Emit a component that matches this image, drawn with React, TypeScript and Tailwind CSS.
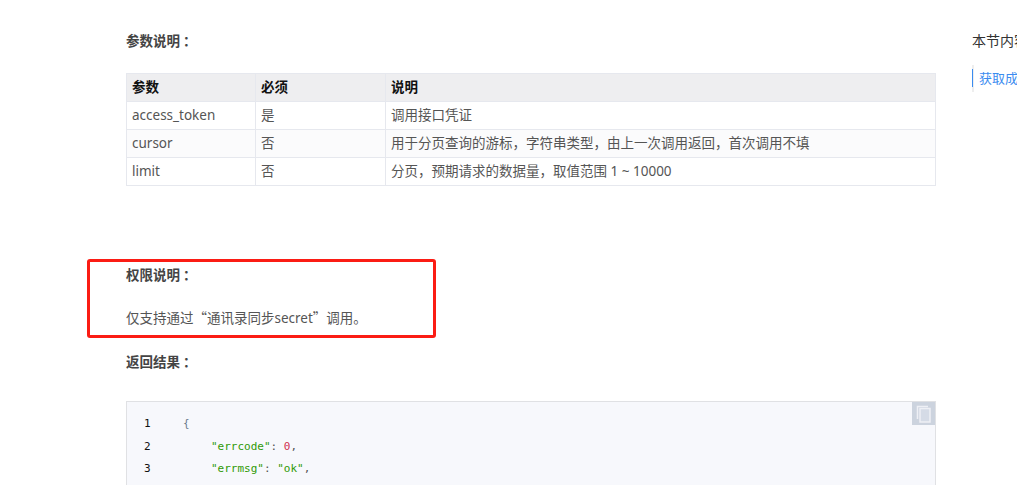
import React from 'react';
import { useState } from 'react';

const rows = [
  { name: 'access_token', required: '是', desc: '调用接口凭证' },
  { name: 'cursor', required: '否', desc: '用于分页查询的游标，字符串类型，由上一次调用返回，首次调用不填' },
  { name: 'limit', required: '否', desc: '分页，预期请求的数据量，取值范围 1 ~ 10000' },
];

const cellClass = 'border border-[#e6e8ee] px-[5px] pt-0 pb-[1px] h-[28px] text-left';
const headingClass = 'font-bold text-[13.5px] leading-[20px] text-[#444] [text-spacing-trim:space-all]';

const CopyIcon: React.FC = () => (
  <svg width="23" height="23" viewBox="0 0 23 23" fill="none" stroke="#eef0f5" strokeWidth="1.5">
    <path d="M16 4.5H5.5V17" />
    <rect x="8" y="6.5" width="10" height="13.5" fill="#d5dbe6" />
  </svg>
);

const Heading: React.FC<{ text: string; className?: string }> = ({ text, className = '' }) => (
  <p className={`${headingClass} ${className}`}>
    {text}
    <span className="ml-[3px]">：</span>
  </p>
);

const App: React.FC = () => {
  const [copied, setCopied] = useState(false);

  return (
    <div className="w-[1017px] h-[485px] overflow-hidden bg-white relative flex text-[13.5px] text-[#555] font-['Noto_Sans','Noto_Sans_CJK_SC',sans-serif]">
      <div className="w-[810px] ml-[126px] shrink-0 pt-[31px]">
        <Heading text="参数说明" />

        <table className="mt-[22px] w-[810px] table-fixed border-collapse">
          <thead>
            <tr className="bg-[#eeeef0] text-[#111]">
              <th className={`${cellClass} w-[129px] font-bold`}>参数</th>
              <th className={`${cellClass} w-[130px] font-bold`}>必须</th>
              <th className={`${cellClass} font-bold`}>说明</th>
            </tr>
          </thead>
          <tbody>
            {rows.map((row, i) => (
              <tr key={row.name} className={i === 1 ? 'bg-[#fbfbfc]' : 'bg-white'}>
                <td className={`${cellClass} font-normal`}>{row.name}</td>
                <td className={`${cellClass} font-normal`}>{row.required}</td>
                <td className={`${cellClass} font-normal`}>{row.desc}</td>
              </tr>
            ))}
          </tbody>
        </table>

        <Heading text="权限说明" className="mt-[79px]" />
        <p className="mt-[22px] leading-[20px]">
          仅支持通过<span className="font-['Noto_Sans_CJK_SC']">“</span>通讯录同步secret<span className="font-['Noto_Sans_CJK_SC']">”</span>调用。
        </p>
        <Heading text="返回结果" className="mt-[24px]" />

        <div className="relative mt-[29px] h-[200px] border border-[#e0e1e4] bg-[#f7f8fc] pt-[11px] font-['DejaVu_Sans_Mono',monospace] text-[11px] leading-[22.5px]">
          <button
            className="absolute top-0 right-0 w-[23px] h-[23px] bg-[#ccd3de]"
            onClick={() => setCopied(!copied)}
            aria-label={copied ? '已复制' : '复制'}
          >
            <CopyIcon />
          </button>
          <div className="flex">
            <span className="w-[56px] pl-[17px] text-[#111]">1</span>
            <span className="text-[#6b7a8c]">{'{'}</span>
          </div>
          <div className="flex">
            <span className="w-[56px] pl-[17px] text-[#111]">2</span>
            <span className="pl-[28px] text-[#555]">
              <span className="text-[#2f9a06]">"errcode"</span>: <span className="text-[#d0304f]">0</span>,
            </span>
          </div>
          <div className="flex">
            <span className="w-[56px] pl-[17px] text-[#111]">3</span>
            <span className="pl-[28px] text-[#555]">
              <span className="text-[#2f9a06]">"errmsg"</span>: <span className="text-[#2f9a06]">"ok"</span>,
            </span>
          </div>
        </div>
      </div>

      <div className="ml-[36px] w-[120px] shrink-0 pt-[31px] whitespace-nowrap">
        <p className="text-[14px] leading-[20px] text-[#333]">本节内容</p>
        <div className="relative mt-[14px] border-l-2 border-[#eeeeee] h-[27px] pl-[5px] leading-[26px] text-[13px] text-[#3b8cf0]">
          <span className="absolute -left-[2px] top-[4px] h-[18px] w-[1px] bg-[#3b8cf0]" />
          获取成员ID列表
        </div>
      </div>

      {/* annotation drawn over the page */}
      <div className="absolute left-[87px] top-[259px] w-[349px] h-[79px] border-[3px] border-[#fb1c14] rounded-[3px]" />
    </div>
  );
};

export default App;
